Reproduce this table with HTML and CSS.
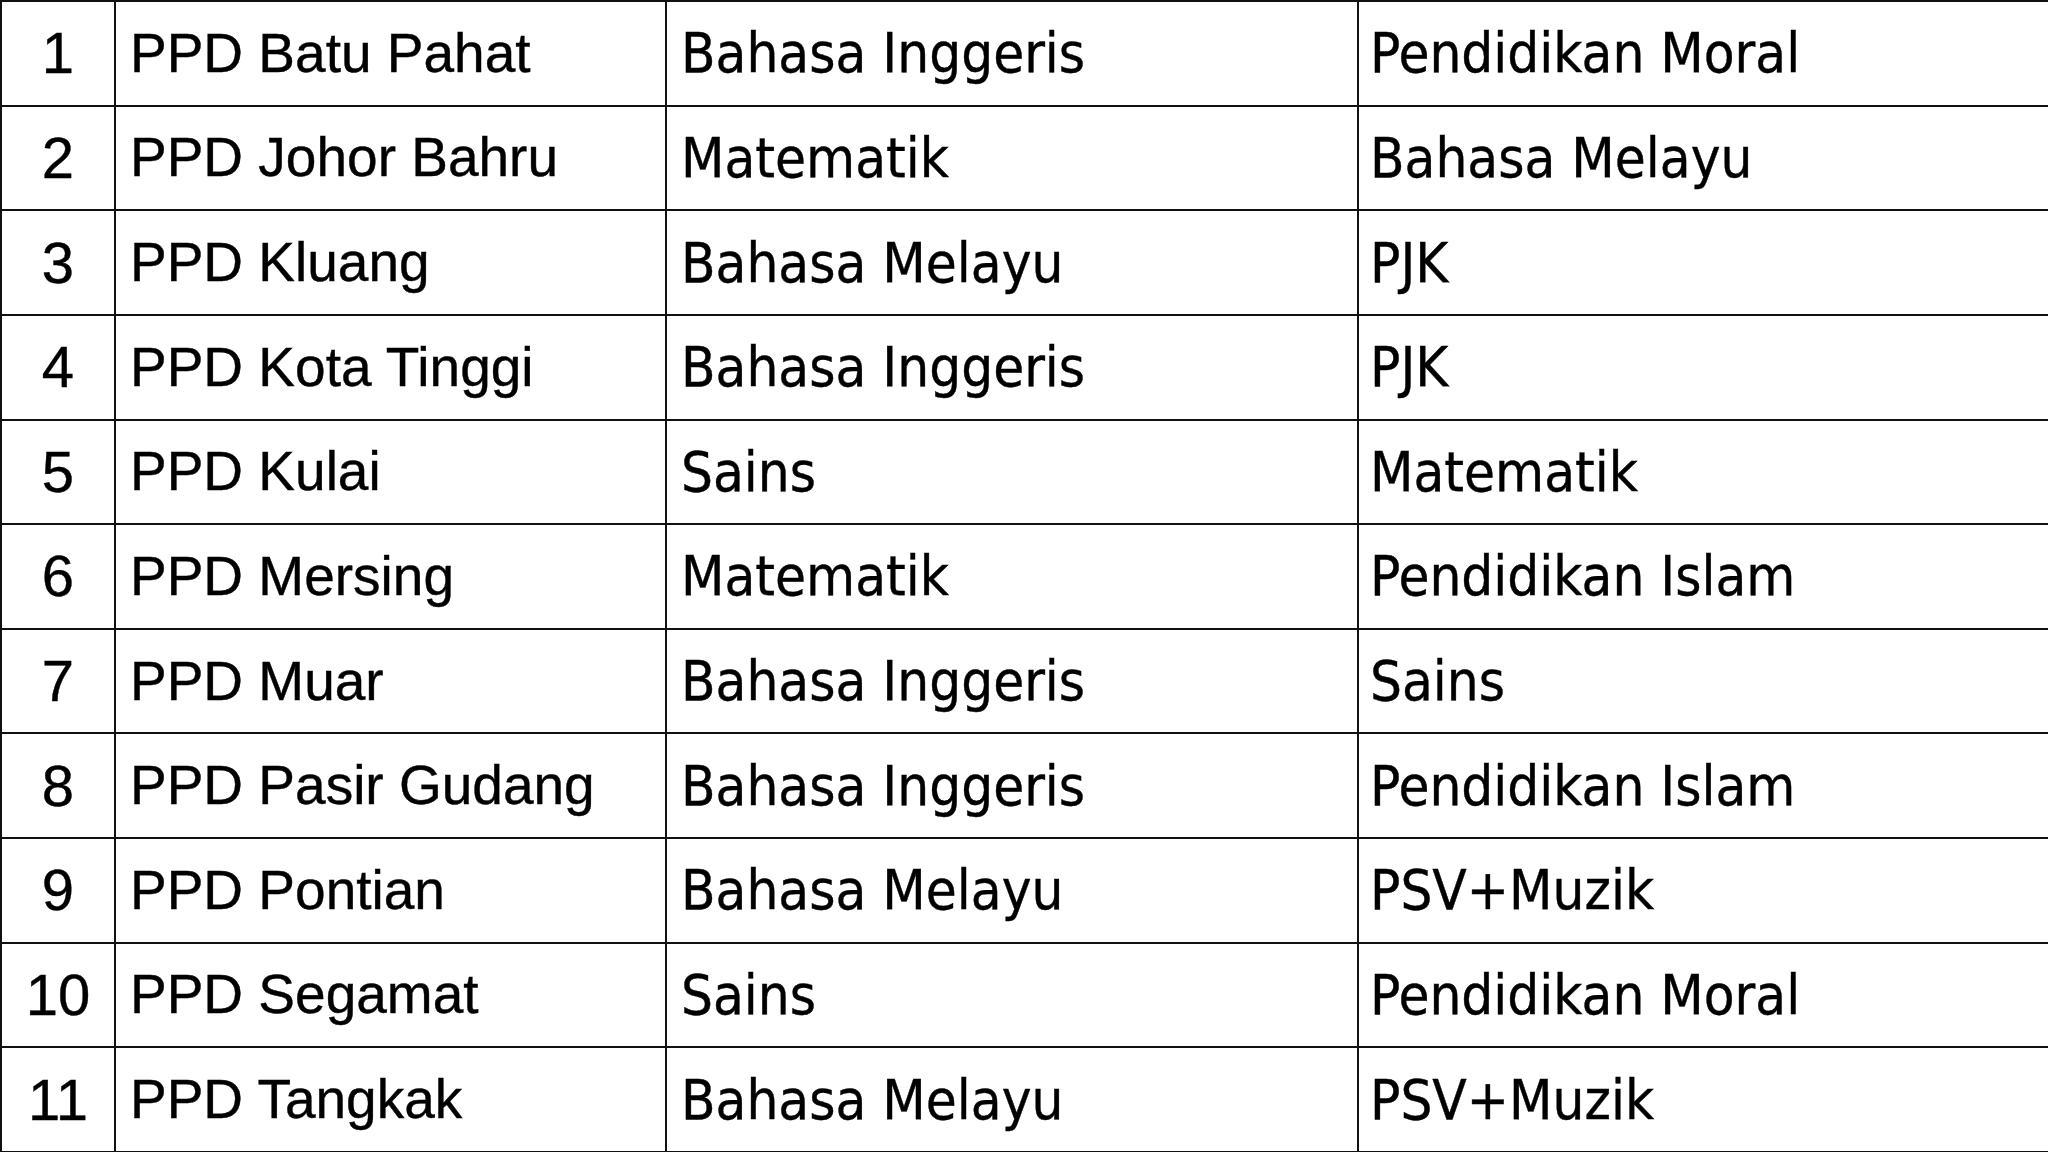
FILE: index.html
```html
<!DOCTYPE html>
<html>
<head>
<meta charset="utf-8">
<link rel="stylesheet" href="styles.css">
</head>
<body>
<table class="grid">
  <colgroup>
    <col class="c-no"><col class="c-ppd"><col class="c-s1"><col class="c-s2">
  </colgroup>
  <tbody>
    <tr><td class="no">1</td><td class="ppd">PPD Batu Pahat</td><td class="sub">Bahasa Inggeris</td><td class="sub last">Pendidikan Moral</td></tr>
    <tr><td class="no">2</td><td class="ppd">PPD Johor Bahru</td><td class="sub">Matematik</td><td class="sub last">Bahasa Melayu</td></tr>
    <tr><td class="no">3</td><td class="ppd">PPD Kluang</td><td class="sub">Bahasa Melayu</td><td class="sub last">PJK</td></tr>
    <tr><td class="no">4</td><td class="ppd">PPD Kota Tinggi</td><td class="sub">Bahasa Inggeris</td><td class="sub last">PJK</td></tr>
    <tr><td class="no">5</td><td class="ppd">PPD Kulai</td><td class="sub">Sains</td><td class="sub last">Matematik</td></tr>
    <tr><td class="no">6</td><td class="ppd">PPD Mersing</td><td class="sub">Matematik</td><td class="sub last">Pendidikan Islam</td></tr>
    <tr><td class="no">7</td><td class="ppd">PPD Muar</td><td class="sub">Bahasa Inggeris</td><td class="sub last">Sains</td></tr>
    <tr><td class="no">8</td><td class="ppd">PPD Pasir Gudang</td><td class="sub">Bahasa Inggeris</td><td class="sub last">Pendidikan Islam</td></tr>
    <tr><td class="no">9</td><td class="ppd">PPD Pontian</td><td class="sub">Bahasa Melayu</td><td class="sub last">PSV+Muzik</td></tr>
    <tr><td class="no">10</td><td class="ppd">PPD Segamat</td><td class="sub">Sains</td><td class="sub last">Pendidikan Moral</td></tr>
    <tr><td class="no">11</td><td class="ppd">PPD Tangkak</td><td class="sub">Bahasa Melayu</td><td class="sub last">PSV+Muzik</td></tr>
  </tbody>
</table>
</body>
</html>
```
FILE: styles.css
```css
html, body {
  margin: 0;
  padding: 0;
  background: #ffffff;
}
body {
  width: 2048px;
  height: 1152px;
  overflow: hidden;
}
.grid {
  border-collapse: collapse;
  table-layout: fixed;
  width: 2048px;
  height: 1153px;
  color: #000;
}
.c-no { width: 114px; }
.c-ppd { width: 551px; }
.c-s1 { width: 692px; }
.c-s2 { width: 691px; }
.grid td {
  border: 2px solid #111;
  height: 90px;
  padding: 0 0 0 14px;
  white-space: nowrap;
  vertical-align: middle;
  line-height: 1;
  -webkit-text-stroke: 0.4px #000;
}
.grid td.no {
  padding: 0;
  text-align: center;
  font-family: "Liberation Sans", Arial, sans-serif;
  font-size: 58px;
}
.grid td.ppd {
  font-family: "Liberation Sans", Arial, sans-serif;
  font-size: 55px;
}
.grid td.sub {
  font-family: "DejaVu Sans Condensed", "DejaVu Sans", sans-serif;
  font-stretch: condensed;
  font-size: 56px;
}
.grid td.sub.last {
  padding-left: 11px;
}
```
